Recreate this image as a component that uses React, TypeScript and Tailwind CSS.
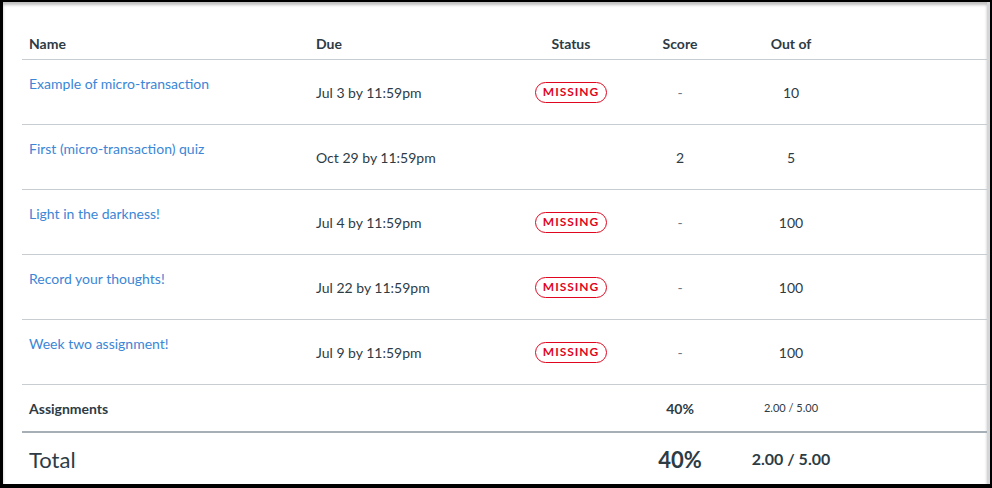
const rows = [
  { name: "Example of micro-transaction", due: "Jul 3 by 11:59pm", missing: true, score: "-", outOf: "10" },
  { name: "First (micro-transaction) quiz", due: "Oct 29 by 11:59pm", missing: false, score: "2", outOf: "5" },
  { name: "Light in the darkness!", due: "Jul 4 by 11:59pm", missing: true, score: "-", outOf: "100" },
  { name: "Record your thoughts!", due: "Jul 22 by 11:59pm", missing: true, score: "-", outOf: "100" },
  { name: "Week two assignment!", due: "Jul 9 by 11:59pm", missing: true, score: "-", outOf: "100" },
];

const cols = "grid grid-cols-[287px_187px_150px_68px_154px_1fr]";

function MissingPill() {
  return (
    <span className="inline-flex items-center h-[21px] px-[7px] rounded-full border border-[#e0061f] text-[#e0061f] text-[12px] font-bold tracking-[0.08em] leading-none">
      MISSING
    </span>
  );
}

export default function App() {
  return (
    <div className="w-[992px] h-[488px] bg-black pt-[2px] pl-[3px] pr-[2px] pb-[4px] font-['Lato',sans-serif] text-[#2d3b45]">
      <div className="h-full bg-white border-r-[3px] border-[#d4d7d9] shadow-[inset_0_3px_3px_rgba(0,0,0,0.25)] pl-[19px] pt-[26px]">
        <div className={`${cols} h-[32px] items-center border-b border-[#c7cdd1] text-[14px] font-bold`}>
          <div className="pl-[7px]">Name</div>
          <div className="pl-[7px]">Due</div>
          <div className="text-center">Status</div>
          <div className="text-center">Score</div>
          <div className="text-center">Out of</div>
          <div />
        </div>

        {rows.map((r) => (
          <div key={r.name} className={`${cols} h-[65px] border-b border-[#c7cdd1] text-[14px]`}>
            <div className="pl-[7px] pt-[13px] text-[#3b86d6]">{r.name}</div>
            <div className="pl-[7px] flex items-center">{r.due}</div>
            <div className="flex items-center justify-center">{r.missing && <MissingPill />}</div>
            <div className={`flex items-center justify-center ${r.score === "-" ? "text-[#6b7780]" : ""}`}>{r.score}</div>
            <div className="flex items-center justify-center">{r.outOf}</div>
            <div />
          </div>
        ))}

        <div className={`${cols} h-[48px] items-center border-b-2 border-[#a5afb5]`}>
          <div className="pl-[7px] text-[14px] font-bold">Assignments</div>
          <div />
          <div />
          <div className="text-center text-[14px] font-bold">40%</div>
          <div className="text-center text-[11px]">2.00 / 5.00</div>
          <div />
        </div>

        <div className={`${cols} h-[52px] items-center`}>
          <div className="pl-[7px] text-[22px] font-normal">Total</div>
          <div />
          <div />
          <div className="text-center text-[22px] font-bold">40%</div>
          <div className="text-center text-[16px] font-bold">2.00 / 5.00</div>
          <div />
        </div>
      </div>
    </div>
  );
}
